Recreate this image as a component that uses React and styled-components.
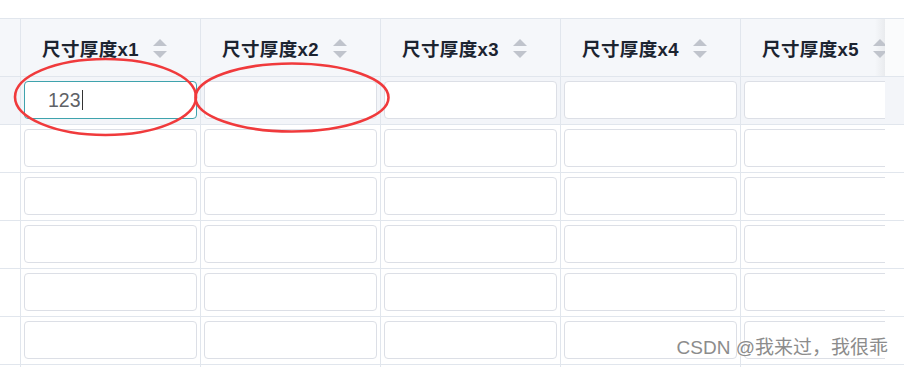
import React from "react";
import styled, { createGlobalStyle } from "styled-components";

const columns = ["尺寸厚度x1", "尺寸厚度x2", "尺寸厚度x3", "尺寸厚度x4", "尺寸厚度x5"];
const rows = [
  ["123", "", "", "", ""],
  ["", "", "", "", ""],
  ["", "", "", "", ""],
  ["", "", "", "", ""],
  ["", "", "", "", ""],
  ["", "", "", "", ""],
  ["", "", "", "", ""],
];

function App() {
  return (
    <Page>
      <GlobalStyle />
      <Table>
        <HeadRow>
          <IndexCell />
          {columns.map((c, i) => (
            <HeadCell key={c} last={i === columns.length - 1}>
              <HeadLabel>{c}</HeadLabel>
              <SortCaret>
                <CaretUp />
                <CaretDown />
              </SortCaret>
            </HeadCell>
          ))}
          <HeadGutter />
        </HeadRow>

        {rows.map((r, ri) => (
          <BodyRow key={ri} current={ri === 0}>
            <IndexCell />
            {r.map((v, ci) => (
              <Cell key={ci} last={ci === r.length - 1}>
                <Input focused={ri === 0 && ci === 0}>
                  {v}
                  {ri === 0 && ci === 0 && <Caret />}
                </Input>
              </Cell>
            ))}
            <Gutter />
          </BodyRow>
        ))}
      </Table>

      <Marks viewBox="0 0 904 367" width="904" height="367">
        <ellipse cx="105.5" cy="97" rx="90.5" ry="38" />
        <ellipse cx="292" cy="97.5" rx="96.5" ry="34" />
      </Marks>

      <Watermark>CSDN @我来过，我很乖</Watermark>
    </Page>
  );
}

export default App;

const GlobalStyle = createGlobalStyle`
  body {
    margin: 0;
    background: #fff;
    font-family: "Liberation Sans", "Noto Sans CJK SC", sans-serif;
  }
`;

const Page = styled.div`
  position: relative;
  width: 904px;
  height: 367px;
  overflow: hidden;
  padding-top: 18px;
  box-sizing: border-box;
`;

const Table = styled.div`
  border-top: 1px solid #e1e6ed;
`;

const grid = `
  display: grid;
  grid-template-columns: 21px repeat(4, 180px) 144px 1fr;
  border-bottom: 1px solid #e1e6ed;
`;

const HeadRow = styled.div`
  ${grid}
  height: 58px;
  box-sizing: border-box;
  background: #f5f7fa;
`;

const BodyRow = styled.div`
  ${grid}
  height: 48px;
  box-sizing: border-box;
  background: ${(p) => (p.current ? "#f3f5f9" : "#fff")};
`;

const IndexCell = styled.div`
  border-right: 1px solid #e1e6ed;
`;

const HeadCell = styled.div`
  display: flex;
  align-items: center;
  gap: 14px;
  padding-left: 21px;
  border-right: ${(p) => (p.last ? "none" : "1px solid #e1e6ed")};
  overflow: hidden;
  white-space: nowrap;
  background: ${(p) =>
    p.last ? "linear-gradient(to right, #f5f7fa calc(100% - 10px), #e9ebee)" : "transparent"};
`;

const HeadLabel = styled.span`
  font-size: 18.5px;
  font-weight: 700;
  color: #1c2430;
  letter-spacing: 0.4px;
`;

const SortCaret = styled.span`
  display: flex;
  flex-direction: column;
  gap: 5px;
  margin-top: 2px;
`;

const CaretUp = styled.i`
  width: 0;
  height: 0;
  border-left: 7px solid transparent;
  border-right: 7px solid transparent;
  border-bottom: 7px solid #c0c4cc;
`;

const CaretDown = styled.i`
  width: 0;
  height: 0;
  border-left: 7px solid transparent;
  border-right: 7px solid transparent;
  border-top: 7px solid #c0c4cc;
`;

const HeadGutter = styled.div`
  background: #fafbfc;
`;

const Gutter = styled.div``;

const Cell = styled.div`
  padding: 4px 3px 5px;
  border-right: ${(p) => (p.last ? "none" : "1px solid #e1e6ed")};
  overflow: hidden;
`;

const Input = styled.div`
  width: 173px;
  height: 38px;
  box-sizing: border-box;
  display: flex;
  align-items: center;
  padding-left: 23px;
  background: #fff;
  border: 1px solid ${(p) => (p.focused ? "#3fa3ad" : "#dcdfe6")};
  border-radius: 4px;
  font-size: 19.5px;
  color: #5f6266;
`;

const Caret = styled.span`
  display: inline-block;
  width: 1.5px;
  height: 20px;
  margin-left: 1px;
  background: #333;
`;

const Marks = styled.svg`
  position: absolute;
  left: 0;
  top: 0;
  pointer-events: none;

  ellipse {
    fill: none;
    stroke: #f03a3c;
    stroke-width: 2.6;
  }
`;

const Watermark = styled.div`
  position: absolute;
  right: 16px;
  bottom: 8px;
  font-size: 19px;
  color: #8c8c8c;
  text-shadow: 0 0 2px #fff, 0 0 2px #fff;
  white-space: nowrap;
`;
